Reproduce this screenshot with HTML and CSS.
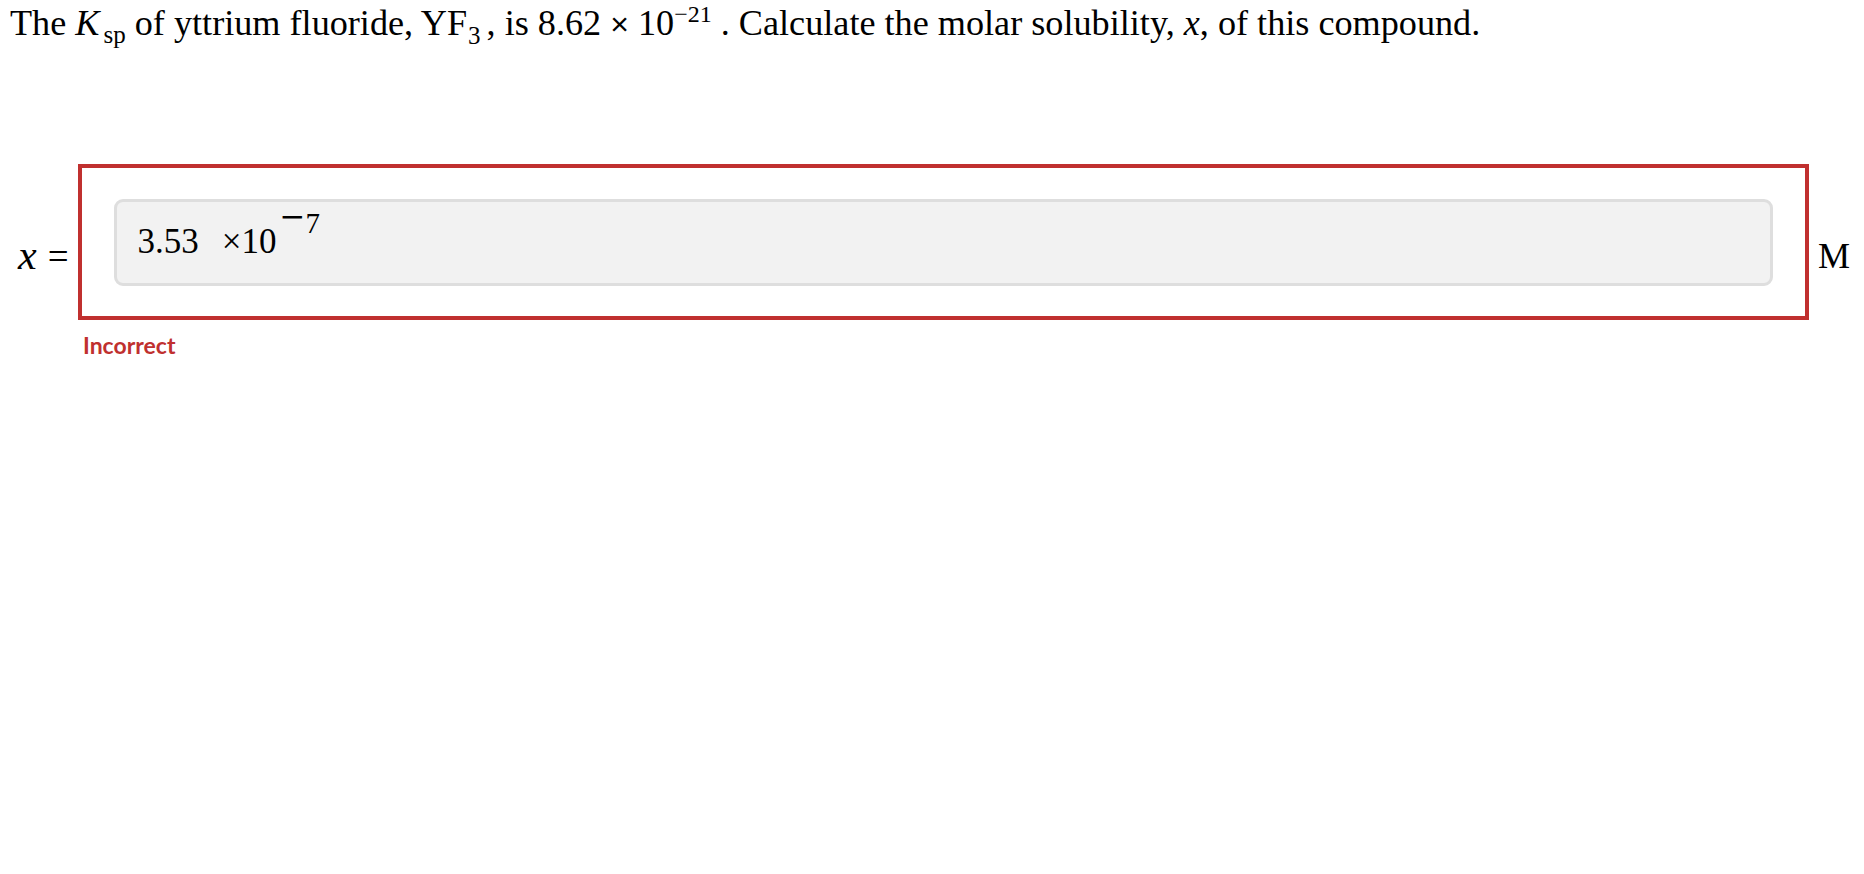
FILE: index.html
```html
<!DOCTYPE html>
<html>
<head>
<meta charset="utf-8">
<link rel="stylesheet" href="styles.css">
</head>
<body>
<div class="page">
  <p class="question">The <i class="var">K</i><sub class="sub">sp</sub> of yttrium fluoride, YF<sub class="sub sub-num">3</sub>, is 8.62 <span class="times">×</span> 10<sup class="sup">−21</sup> . Calculate the molar solubility, <i class="var">x</i>, of this compound.</p>

  <div class="answer-row">
    <div class="label"><i class="var label-x">x</i><span class="eq">=</span></div>
    <div class="answer-box">
      <div class="answer-input">3.53<span class="mult">×10<sup class="exp"><span class="minus">−</span>7</sup></span></div>
    </div>
    <div class="unit">M</div>
  </div>
  <div class="feedback">Incorrect</div>
</div>
</body>
</html>
```

FILE: styles.css
```css
html, body {
  margin: 0;
  padding: 0;
  background: #ffffff;
}

.page {
  font-family: "Liberation Serif", "Times New Roman", serif;
  color: #000;
}

.question {
  margin: 0;
  padding: 2px 0 0 10px;
  font-size: 36.2px;
  line-height: 42px;
  white-space: nowrap;
}

.var {
  font-style: italic;
}

.sub {
  font-size: 25px;
  line-height: 0;
  vertical-align: -8px;
  margin-left: 4px;
}

.sub-num {
  vertical-align: -9px;
  margin-left: 1px;
  margin-right: 6px;
}

.sup {
  font-size: 24px;
  line-height: 0;
  vertical-align: 13px;
}

.times {
  font-family: "Liberation Sans", Arial, sans-serif;
  font-size: 32px;
}

.answer-row {
  display: flex;
  align-items: center;
  margin-top: 119px;
}

.label {
  display: flex;
  align-items: baseline;
  line-height: 40px;
  padding: 28px 9px 0 18px;
  white-space: nowrap;
}

.label-x {
  font-size: 42px;
}

.eq {
  font-size: 37px;
  margin-left: 11px;
}

.answer-box {
  flex: 1;
  border: 4px solid #c0302f;
  padding: 31px 32px 30px 32px;
}

.answer-input {
  background: #f2f2f2;
  border: 3px solid #dedede;
  border-radius: 9px;
  padding: 20px 21px 21px 21px;
  font-size: 35px;
  line-height: 40px;
  white-space: nowrap;
}

.mult {
  margin-left: 23px;
}

.exp {
  font-size: 29px;
  line-height: 0;
  vertical-align: 20px;
  margin-left: 3px;
}

.minus {
  display: inline-block;
  font-family: "DejaVu Sans", sans-serif;
  font-size: 31px;
  line-height: 0;
  transform: translateY(-6px);
}

.unit {
  font-size: 36px;
  line-height: 40px;
  padding-top: 28px;
  margin: 0 14px 0 9px;
}

.feedback {
  margin: 11px 0 0 83px;
  font-family: Lato, "Liberation Sans", sans-serif;
  font-weight: 700;
  font-size: 23px;
  color: #c0302f;
}
```
